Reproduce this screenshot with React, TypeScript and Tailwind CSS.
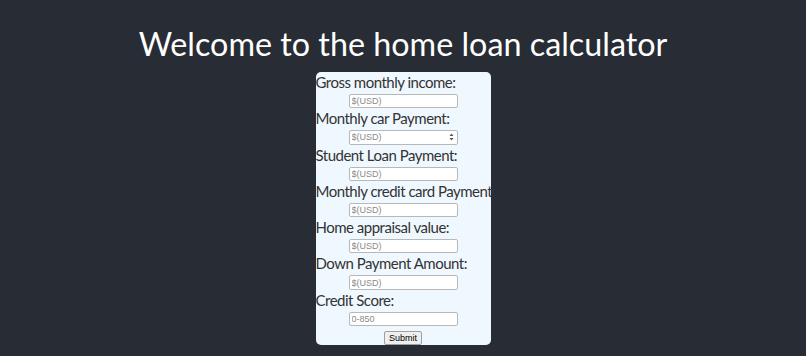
const fields = [
  { label: "Gross monthly income:", placeholder: "$(USD)" },
  { label: "Monthly car Payment:", placeholder: "$(USD)", spinner: true },
  { label: "Student Loan Payment:", placeholder: "$(USD)" },
  { label: "Monthly credit card Payment:", placeholder: "$(USD)" },
  { label: "Home appraisal value:", placeholder: "$(USD)" },
  { label: "Down Payment Amount:", placeholder: "$(USD)" },
  { label: "Credit Score:", placeholder: "0-850" },
];

export default function App() {
  return (
    <div className="flex h-[356px] flex-col items-center bg-[#282c34] font-['Lato',sans-serif]">
      <h1 className="mt-[24px] h-[48px] text-[32.3px] leading-[40px] text-white">
        Welcome to the home loan calculator
      </h1>
      <form className="flex w-[175px] flex-col rounded-[5px] bg-[#f0f8ff]" onSubmit={(e) => e.preventDefault()}>
        {fields.map((f) => (
          <div key={f.label} className="flex flex-col">
            <label className="h-[22px] whitespace-nowrap pt-[1px] text-[15px] leading-[19px] tracking-[-0.5px] text-[#333]">
              {f.label}
            </label>
            <div className="relative mx-auto h-[14.3px] w-[109px]">
              <input
                className="block h-full w-full rounded-[2px] border border-[#b8b8b8] bg-white px-[2px] font-['Liberation_Sans',sans-serif] text-[9px] leading-[12px] outline-none placeholder:text-[#8a8a8a]"
                placeholder={f.placeholder}
                type="text"
              />
              {f.spinner ? (
                <svg className="absolute right-[4px] top-[3px]" width="5" height="8" viewBox="0 0 5 8">
                  <path d="M0.5 3 L2.5 0.5 L4.5 3 Z M0.5 5 L2.5 7.5 L4.5 5 Z" fill="#555" />
                </svg>
              ) : null}
            </div>
          </div>
        ))}
        <button
          className="mx-auto mt-[5px] block h-[14px] rounded-[2px] border border-[#a0a0a0] bg-[#efefef] px-[4px] font-['Liberation_Sans',sans-serif] text-[9px] leading-[12px] text-black"
          type="submit"
        >
          Submit
        </button>
      </form>
    </div>
  );
}
